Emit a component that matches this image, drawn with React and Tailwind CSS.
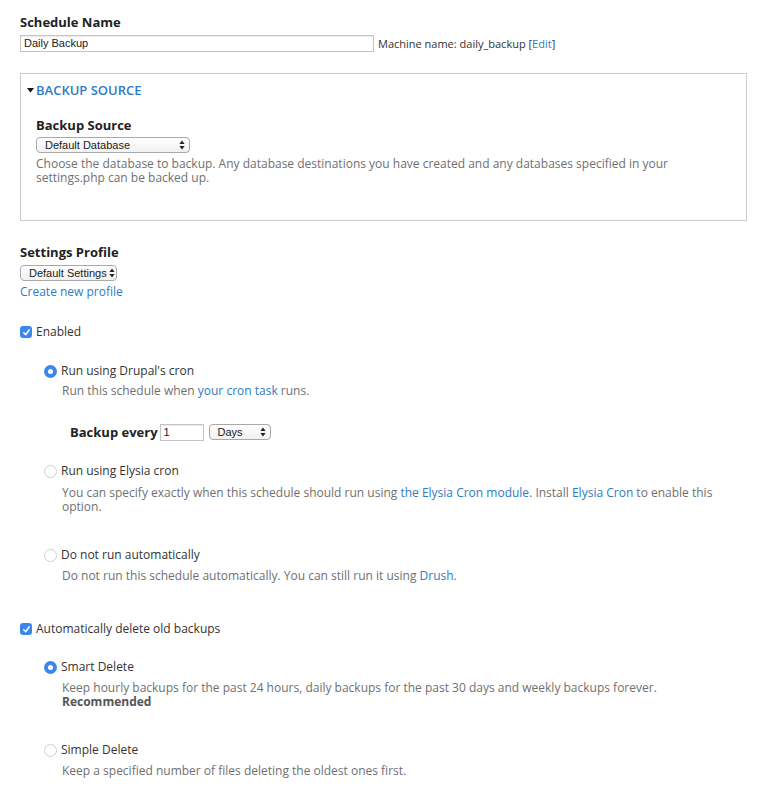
import React from "react";

const F = { fontFamily: '"Open Sans", "DejaVu Sans", sans-serif' };

function Select({ label, width }) {
  return (
    <div
      className={`flex items-center justify-between h-[16px] rounded-[4px] border border-[#a9a9a9] bg-gradient-to-b from-white to-[#f1f1f1] pl-[8px] pr-[4px] text-[11px] leading-[14px] text-[#222] whitespace-nowrap ${width}`}
      style={{ fontFamily: '"Liberation Sans", Arial, sans-serif' }}
    >
      <span>{label}</span>
      <svg width="6" height="10" viewBox="0 0 6 10" className="ml-[2px] shrink-0">
        <path d="M3 0.5 L5.6 4 L0.4 4 Z" fill="#222" />
        <path d="M3 9.5 L5.6 6 L0.4 6 Z" fill="#222" />
      </svg>
    </div>
  );
}

function Checkbox() {
  return (
    <span className="inline-flex items-center justify-center w-[12px] h-[12px] rounded-[3px] bg-[#3b87f0] mr-[4px]">
      <svg width="9" height="9" viewBox="0 0 9 9">
        <path d="M1.8 4.8 L3.7 6.8 L7.3 1.8" fill="none" stroke="white" strokeWidth="1.5" strokeLinecap="round" strokeLinejoin="round" />
      </svg>
    </span>
  );
}

function Radio({ checked }) {
  return checked ? (
    <span className="inline-flex items-center justify-center w-[13px] h-[13px] rounded-full bg-[#3b87f0] mr-[4px] mt-[2px]">
      <span className="w-[5px] h-[5px] rounded-full bg-white" />
    </span>
  ) : (
    <span className="inline-block w-[13px] h-[13px] rounded-full border border-[#cfcfcf] bg-white mr-[4px] mt-[2px]" />
  );
}

function Link({ children }) {
  return <span className="text-[#2f7bc4]">{children}</span>;
}

export default function App() {
  return (
    <div className="bg-white w-[768px] h-[796px] overflow-hidden text-[#333] pl-[20px] pt-[14px]" style={F}>
      <div className="text-[13px] leading-[16px] font-bold text-[#222]">Schedule Name</div>
      <div className="flex items-center mt-[5px] h-[17px]">
        <div
          className="w-[354px] h-[17px] border border-[#c4c4c4] shadow-[inset_0_1px_1px_rgba(0,0,0,0.08)] pl-[3px] text-[11px] leading-[15px] text-[#222]"
          style={{ fontFamily: '"Liberation Sans", Arial, sans-serif' }}
        >
          Daily Backup
        </div>
        <div className="ml-[4px] text-[11px] leading-[14px] text-[#333]">
          Machine name: daily_backup [<Link>Edit</Link>]
        </div>
      </div>

      <div className="mt-[21px] w-[727px] h-[148px] border border-[#cccccc] pl-[6px] pt-[8px]">
        <div className="flex items-center h-[16px]">
          <svg width="7" height="5" viewBox="0 0 7 5" className="mr-[2px] mt-[1px]">
            <path d="M0 0 L7 0 L3.5 4.5 Z" fill="#111" />
          </svg>
          <span className="text-[13px] leading-[16px] text-[#2f7bc4] font-semibold">BACKUP SOURCE</span>
        </div>
        <div className="pl-[9px]">
          <div className="mt-[19px] text-[13px] leading-[16px] font-bold text-[#222]">Backup Source</div>
          <div className="mt-[4px]">
            <Select label="Default Database" width="w-[154px]" />
          </div>
          <div className="mt-[4px] text-[12px] leading-[14px] text-[#707070] w-[660px]">
            Choose the database to backup. Any database destinations you have created and any databases specified in your settings.php can be backed up.
          </div>
        </div>
      </div>

      <div className="mt-[23px] text-[13px] leading-[16px] font-bold text-[#222]">Settings Profile</div>
      <div className="mt-[5px]">
        <Select label="Default Settings" width="w-[97px]" />
      </div>
      <div className="mt-[4px] text-[12px] leading-[14px]">
        <Link>Create new profile</Link>
      </div>

      <div className="mt-[25px] flex items-center h-[16px] text-[12px] leading-[16px]">
        <Checkbox />
        <span>Enabled</span>
      </div>

      <div className="pl-[24px]">
        <div className="mt-[23px] flex items-start h-[16px] text-[12px] leading-[16px]">
          <Radio checked />
          <span>Run using Drupal's cron</span>
        </div>
        <div className="mt-[5px] pl-[18px] text-[12px] leading-[14px] text-[#707070]">
          Run this schedule when <Link>your cron task</Link> runs.
        </div>
        <div className="mt-[26px] pl-[26px] flex items-center h-[16px]">
          <span className="text-[13px] leading-[16px] font-bold text-[#222]">Backup every</span>
          <div
            className="ml-[2px] w-[44px] h-[17px] border border-[#c4c4c4] shadow-[inset_0_1px_1px_rgba(0,0,0,0.08)] pl-[3px] text-[11px] leading-[15px] text-[#222]"
            style={{ fontFamily: '"Liberation Sans", Arial, sans-serif' }}
          >
            1
          </div>
          <div className="ml-[5px]">
            <Select label="Days" width="w-[62px]" />
          </div>
        </div>

        <div className="mt-[23px] flex items-start h-[16px] text-[12px] leading-[16px]">
          <Radio />
          <span>Run using Elysia cron</span>
        </div>
        <div className="mt-[7px] pl-[18px] text-[12px] leading-[14px] text-[#707070] w-[690px]">
          You can specify exactly when this schedule should run using <Link>the Elysia Cron module</Link>. Install <Link>Elysia Cron</Link> to enable this option.
        </div>

        <div className="mt-[33px] flex items-start h-[16px] text-[12px] leading-[16px]">
          <Radio />
          <span>Do not run automatically</span>
        </div>
        <div className="mt-[6px] pl-[18px] text-[12px] leading-[14px] text-[#707070]">
          Do not run this schedule automatically. You can still run it using <Link>Drush</Link>.
        </div>
      </div>

      <div className="mt-[38px] flex items-center h-[16px] text-[12px] leading-[16px]">
        <Checkbox />
        <span>Automatically delete old backups</span>
      </div>

      <div className="pl-[24px]">
        <div className="mt-[22px] flex items-start h-[16px] text-[12px] leading-[16px]">
          <Radio checked />
          <span>Smart Delete</span>
        </div>
        <div className="mt-[6px] pl-[18px] text-[12px] leading-[14px] text-[#707070] w-[690px]">
          Keep hourly backups for the past 24 hours, daily backups for the past 30 days and weekly backups forever.
          <br />
          <span className="font-bold text-[#555]">Recommended</span>
        </div>

        <div className="mt-[33px] flex items-start h-[16px] text-[12px] leading-[16px]">
          <Radio />
          <span>Simple Delete</span>
        </div>
        <div className="mt-[6px] pl-[18px] text-[12px] leading-[14px] text-[#707070]">
          Keep a specified number of files deleting the oldest ones first.
        </div>
      </div>
    </div>
  );
}
